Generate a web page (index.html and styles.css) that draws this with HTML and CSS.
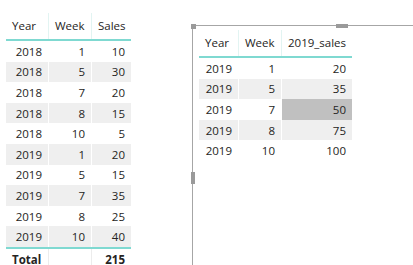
FILE: index.html
```html
<!DOCTYPE html>
<html>
<head>
<meta charset="utf-8">
<link rel="stylesheet" href="styles.css">
</head>
<body>
<div class="page">
  <div class="tbl tbl-left">
    <div class="row head"><div class="c l">Year</div><div class="c l">Week</div><div class="c l">Sales</div></div>
    <div class="row"><div class="c">2018</div><div class="c">1</div><div class="c">10</div></div>
    <div class="row alt"><div class="c">2018</div><div class="c">5</div><div class="c">30</div></div>
    <div class="row"><div class="c">2018</div><div class="c">7</div><div class="c">20</div></div>
    <div class="row alt"><div class="c">2018</div><div class="c">8</div><div class="c">15</div></div>
    <div class="row"><div class="c">2018</div><div class="c">10</div><div class="c">5</div></div>
    <div class="row alt"><div class="c">2019</div><div class="c">1</div><div class="c">20</div></div>
    <div class="row"><div class="c">2019</div><div class="c">5</div><div class="c">15</div></div>
    <div class="row alt"><div class="c">2019</div><div class="c">7</div><div class="c">35</div></div>
    <div class="row"><div class="c">2019</div><div class="c">8</div><div class="c">25</div></div>
    <div class="row alt last"><div class="c">2019</div><div class="c">10</div><div class="c">40</div></div>
    <div class="row total"><div class="c l">Total</div><div class="c"></div><div class="c">215</div></div>
  </div>
  <div class="frame">
    <span class="handle corner"></span>
    <span class="handle top"></span>
    <span class="handle side"></span>
    <div class="tbl tbl-right">
      <div class="row head"><div class="c l">Year</div><div class="c l">Week</div><div class="c l">2019_sales</div></div>
      <div class="row"><div class="c">2019</div><div class="c">1</div><div class="c">20</div></div>
      <div class="row alt"><div class="c">2019</div><div class="c">5</div><div class="c">35</div></div>
      <div class="row"><div class="c">2019</div><div class="c">7</div><div class="c sel">50</div></div>
      <div class="row alt"><div class="c">2019</div><div class="c">8</div><div class="c">75</div></div>
      <div class="row"><div class="c">2019</div><div class="c">10</div><div class="c">100</div></div>
    </div>
  </div>
</div>
</body>
</html>
```
FILE: styles.css
```css
html, body {
  margin: 0;
  padding: 0;
  background: #ffffff;
}
.page {
  display: flex;
  align-items: flex-start;
  width: 413px;
  height: 265px;
  overflow: hidden;
  font-family: "Segoe UI", "Open Sans", sans-serif;
  font-size: 11.5px;
  color: #252423;
}
.tbl {
  display: flex;
  flex-direction: column;
}
.tbl-left {
  margin: 13px 0 0 6px;
  width: 125px;
  flex: none;
}
.tbl-left .row {
  display: grid;
  grid-template-columns: 42px 43px 40px;
}
.tbl-right {
  width: 153px;
}
.tbl-right .row {
  display: grid;
  grid-template-columns: 39px 43px 71px;
}
.row {
  height: 20.6px;
}
.row.alt {
  background: #efefef;
}
.c {
  box-sizing: border-box;
  display: flex;
  align-items: center;
  justify-content: flex-end;
  padding: 0 6px;
  white-space: nowrap;
  border-left: 1px solid #ffffff;
}
.c:first-child {
  border-left: none;
}
.c.l {
  justify-content: flex-start;
}
.row.head {
  height: 28px;
  border-bottom: 2px solid #7fd9d1;
  box-sizing: border-box;
}
.row.head .c {
  border-left-color: #e2f4f2;
  padding-bottom: 2px;
}
.row.last {
  border-bottom: 2px solid #7fd9d1;
  height: 22.6px;
  box-sizing: border-box;
}
.row.total {
  font-weight: bold;
}
.row.total .c {
  border-left-color: #ececec;
}
.c.sel {
  background: #c0c0c0;
}
.frame {
  position: relative;
  flex: 1;
  align-self: stretch;
  margin: 25px 0 0 61px;
  border-top: 1px solid #a6a6a6;
  border-left: 1px solid #a6a6a6;
  padding: 4px 0 0 6px;
}
.handle {
  position: absolute;
  background: #9a9a9a;
}
.handle.corner {
  left: -2px;
  top: -2px;
  width: 5px;
  height: 5px;
}
.handle.top {
  left: 143px;
  top: -2px;
  width: 12px;
  height: 4px;
}
.handle.side {
  left: -2px;
  top: 146px;
  width: 4px;
  height: 12px;
}
```
